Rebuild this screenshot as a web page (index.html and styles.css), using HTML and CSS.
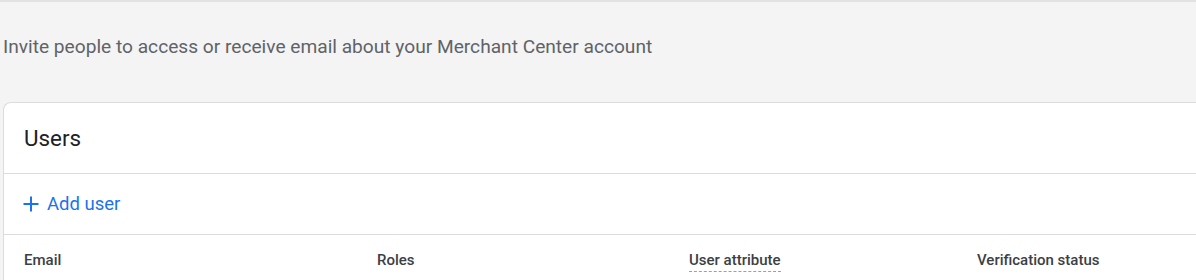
FILE: index.html
```html
<!DOCTYPE html>
<html>
<head>
<meta charset="utf-8">
<link rel="stylesheet" href="styles.css">
</head>
<body>
<div class="page">
  <p class="intro">Invite people to access or receive email about your Merchant Center account</p>
  <section class="card">
    <h2 class="card-title">Users</h2>
    <div class="actions">
      <button class="add-btn">
        <svg class="plus" width="16" height="16" viewBox="0 0 16 16"><path d="M8 0.5v15M0.5 8h15" stroke="#1a73e8" stroke-width="2" fill="none"/></svg>
        <span>Add user</span>
      </button>
    </div>
    <div class="table-head">
      <div class="th th-email">Email</div>
      <div class="th th-roles">Roles</div>
      <div class="th th-attr"><span class="dashed">User attribute</span></div>
      <div class="th th-status">Verification status</div>
    </div>
  </section>
</div>
</body>
</html>
```

FILE: styles.css
```css
html, body {
  margin: 0;
  padding: 0;
  background: #f4f4f4;
  font-family: Roboto, "Noto Sans", Arial, sans-serif;
  overflow: hidden;
}
.page {
  border-top: 2px solid #e2e2e2;
  padding: 0 0 0 3px;
  height: 280px;
  box-sizing: border-box;
}
.intro {
  margin: 0;
  padding: 33px 0 0 0;
  height: 100px;
  box-sizing: border-box;
  font-size: 19.15px;
  line-height: 24px;
  color: #5f6368;
}
.card {
  background: #fff;
  border: 1px solid #dadce0;
  border-right: none;
  border-radius: 8px 0 0 0;
  margin-right: -10px;
  height: 200px;
}
.card-title {
  margin: 0;
  padding: 0 0 0 20px;
  height: 70px;
  display: flex;
  align-items: center;
  font-size: 22.4px;
  font-weight: 400;
  color: #202124;
  border-bottom: 1px solid #dadce0;
}
.actions {
  height: 60px;
  display: flex;
  align-items: center;
  padding-left: 19px;
  border-bottom: 1px solid #dadce0;
}
.add-btn {
  display: flex;
  align-items: center;
  gap: 8px;
  background: none;
  border: none;
  padding: 0;
  font-family: inherit;
  font-size: 18.5px;
  color: #1a73e8;
  cursor: pointer;
}
.plus { display: block; }
.table-head {
  display: grid;
  grid-template-columns: 353px 312px 288px 1fr;
  height: 48px;
  align-items: center;
  padding-left: 20px;
}
.th {
  font-size: 15px;
  font-weight: 500;
  color: #3c4043;
  padding-top: 2px;
}
.dashed {
  border-bottom: 1px dashed #9aa0a6;
  padding-bottom: 2px;
}
```
